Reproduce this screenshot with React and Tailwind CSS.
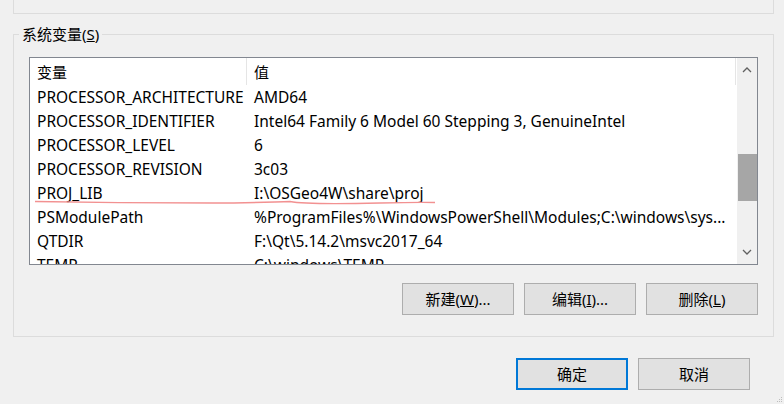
import React from 'react';

const rows = [
  ['PROCESSOR_ARCHITECTURE', 'AMD64'],
  ['PROCESSOR_IDENTIFIER', 'Intel64 Family 6 Model 60 Stepping 3, GenuineIntel'],
  ['PROCESSOR_LEVEL', '6'],
  ['PROCESSOR_REVISION', '3c03'],
  ['PROJ_LIB', 'I:\\OSGeo4W\\share\\proj'],
  ['PSModulePath', '%ProgramFiles%\\WindowsPowerShell\\Modules;C:\\windows\\sys...'],
  ['QTDIR', 'F:\\Qt\\5.14.2\\msvc2017_64'],
  ['TEMP', 'C:\\windows\\TEMP'],
];

const font = { fontFamily: '"Noto Sans", "Noto Sans CJK SC", sans-serif' };

function Btn({ children, primary }) {
  return (
    <button
      className={
        primary
          ? 'w-[112px] h-[32px] bg-[#e1e1e1] border-2 border-[#0078d7] text-[15px] text-black flex items-center justify-center'
          : 'w-[112px] h-[32px] bg-[#e1e1e1] border border-[#adadad] text-[15px] text-black flex items-center justify-center'
      }
    >
      {children}
    </button>
  );
}

export default function App() {
  return (
    <div className="relative w-[784px] h-[404px] bg-[#f0f0f0] overflow-hidden text-black" style={font}>
      {/* tail of the user variables group */}
      <div className="ml-[13px] w-[761px] h-[14px] border-l border-r border-b border-[#dcdcdc]" />

      {/* system variables group */}
      <div className="relative mt-[20px] ml-[13px] w-[761px] h-[303px] border border-[#dcdcdc] pl-[15px] pt-[22px]">
        <span className="absolute left-[5px] top-[-11px] px-[3px] bg-[#f0f0f0] text-[15px] leading-[20px]">
          系统变量(<span className="underline">S</span>)
        </span>

        <div className="flex w-[729px] h-[208px] border border-[#828790] bg-white">
          <div className="flex-1 flex flex-col overflow-hidden">
            <div className="flex h-[27px] shrink-0 items-center text-[15px]">
              <div className="w-[217px] h-full flex items-center pl-[7px] pt-[1px] border-r border-[#e5e5e5]">变量</div>
              <div className="flex-1 h-full flex items-center pl-[7px] pt-[1px] border-r border-[#e5e5e5] mr-[1px]">值</div>
            </div>
            {rows.map(([k, v]) => (
              <div key={k} className="flex h-[24px] shrink-0 items-center pt-[2px] text-[15.5px] whitespace-nowrap">
                <div className="w-[217px] pl-[7px] overflow-hidden">{k}</div>
                <div className="flex-1 pl-[7px] overflow-hidden">{v}</div>
              </div>
            ))}
          </div>
          <div className="w-[20px] bg-[#f0f0f0] flex flex-col items-center">
            <div className="h-[24px] w-full flex items-center justify-center">
              <svg width="10" height="6" viewBox="0 0 10 6">
                <path d="M1 5 L5 1 L9 5" fill="none" stroke="#606060" strokeWidth="1.3" />
              </svg>
            </div>
            <div className="h-[72px]" />
            <div className="w-[19px] h-[47px] bg-[#a6a6a6]" />
            <div className="flex-1" />
            <div className="h-[24px] w-full flex items-center justify-center">
              <svg width="10" height="6" viewBox="0 0 10 6">
                <path d="M1 1 L5 5 L9 1" fill="none" stroke="#606060" strokeWidth="1.3" />
              </svg>
            </div>
          </div>
        </div>

        <div className="flex justify-end gap-[10px] w-[729px] mt-[18px]">
          <Btn>
            新建(<span className="underline">W</span>)...
          </Btn>
          <Btn>
            编辑(<span className="underline">I</span>)...
          </Btn>
          <Btn>
            删除(<span className="underline">L</span>)
          </Btn>
        </div>
      </div>

      <div className="flex justify-end gap-[10px] mt-[21px] mr-[34px]">
        <Btn primary>确定</Btn>
        <Btn>取消</Btn>
      </div>

      {/* red hand-drawn underline */}
      <svg className="absolute left-0 top-0 pointer-events-none" width="784" height="404">
        <path
          d="M35 201.5 C90 202.5 160 203 213 203 C250 203 270 202 290 201.5 C300 203.5 340 204 380 203 C400 202.5 420 202 435 202.5"
          fill="none"
          stroke="#f29191"
          strokeWidth="1.4"
        />
      </svg>

      {/* size grip */}
      <svg className="absolute right-0 bottom-0" width="8" height="8" viewBox="0 0 8 8">
        <rect x="5" y="1" width="1" height="1" fill="#bdbdbd" />
        <rect x="3" y="3" width="1" height="1" fill="#bdbdbd" />
        <rect x="5" y="3" width="1" height="1" fill="#bdbdbd" />
        <rect x="1" y="5" width="1" height="1" fill="#bdbdbd" />
        <rect x="3" y="5" width="1" height="1" fill="#bdbdbd" />
        <rect x="5" y="5" width="1" height="1" fill="#bdbdbd" />
      </svg>
    </div>
  );
}
